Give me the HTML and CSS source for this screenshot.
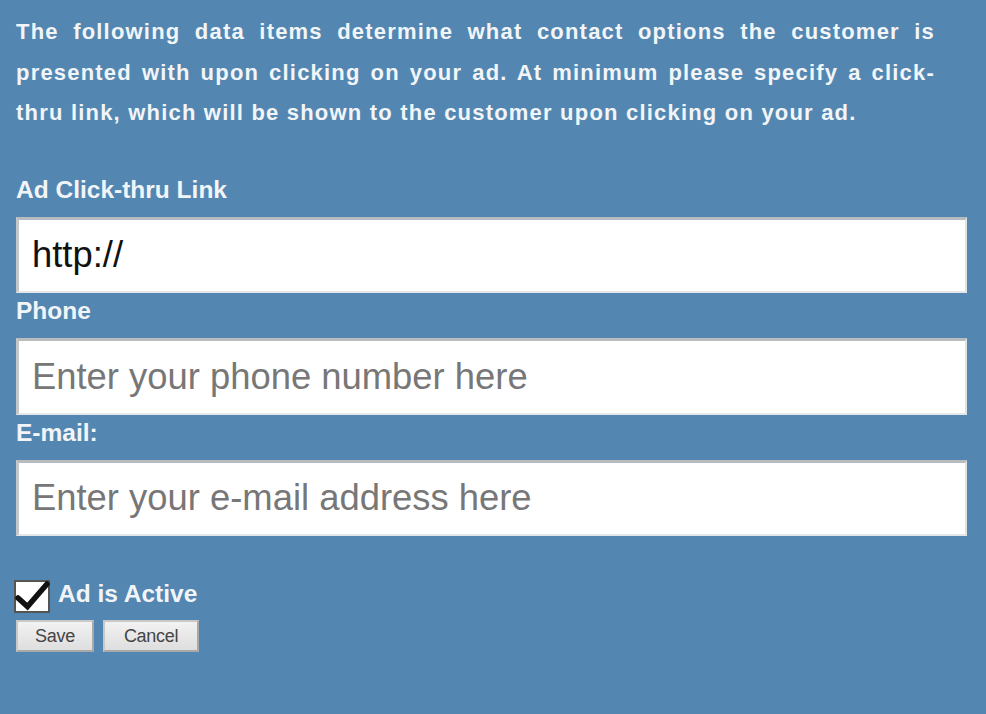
FILE: index.html
```html
<!DOCTYPE html>
<html>
<head>
<meta charset="utf-8">
<link rel="stylesheet" href="styles.css">
</head>
<body>
<div class="panel">
  <p class="intro">The following data items determine what contact options the customer is presented with upon clicking on your ad. At minimum please specify a click-thru link, which will be shown to the customer upon clicking on your ad.</p>
  <form class="form">
    <label class="field-label" for="link">Ad Click-thru Link</label>
    <input class="field" id="link" type="text" value="http://">
    <label class="field-label" for="phone">Phone</label>
    <input class="field" id="phone" type="text" placeholder="Enter your phone number here">
    <label class="field-label" for="email">E-mail:</label>
    <input class="field" id="email" type="text" placeholder="Enter your e-mail address here">
    <div class="active-row">
      <span class="checkbox">
        <svg class="check" viewBox="0 0 36 33" width="36" height="33"><path d="M4 18 L13.5 26.5 L33 4" fill="none" stroke="#111" stroke-width="5.5" stroke-linecap="round" stroke-linejoin="miter"/></svg>
      </span>
      <span class="active-label">Ad is Active</span>
    </div>
    <div class="buttons">
      <button type="button" class="btn btn-save">Save</button>
      <button type="button" class="btn btn-cancel">Cancel</button>
    </div>
  </form>
</div>
</body>
</html>
```
FILE: styles.css
```css
html, body {
  margin: 0;
  padding: 0;
  background: #5387b1;
  height: 100%;
}
.panel {
  padding: 12px 19px 0 16px;
  font-family: "Liberation Sans", Arial, sans-serif;
  color: #f2f5f8;
}
.intro {
  margin: 0 32px 38px 0;
  font-size: 22px;
  font-weight: bold;
  line-height: 40.5px;
  letter-spacing: 1.2px;
  text-align: justify;
}
.form {
  display: flex;
  flex-direction: column;
}
.field-label {
  display: block;
  font-size: 24.5px;
  font-weight: bold;
  line-height: 36px;
  margin-bottom: 9px;
}
.field {
  box-sizing: border-box;
  height: 76.5px;
  width: 100%;
  margin: 0;
  padding: 0 13px;
  border-style: solid;
  border-width: 3px 2px 2px 3px;
  border-color: #b9bcbf #dfe3e6 #e4e7ea #c4c7ca;
  background: #fff;
  font-family: "Liberation Sans", Arial, sans-serif;
  font-size: 36.4px;
  color: #111;
  outline: none;
}
.field::placeholder {
  color: #777;
}
.active-row {
  display: flex;
  align-items: flex-start;
  margin-top: 44px;
  margin-left: -2px;
  gap: 8px;
}
.checkbox {
  position: relative;
  box-sizing: border-box;
  width: 36px;
  height: 33px;
  border: 2px solid #555;
  background: #fff;
  flex: none;
}
.check {
  position: absolute;
  left: -2px;
  top: -2px;
}
.active-label {
  font-size: 24.5px;
  font-weight: bold;
  line-height: 26px;
  padding-top: 1px;
}
.buttons {
  display: flex;
  gap: 9px;
  margin-top: 7px;
}
.btn {
  box-sizing: border-box;
  height: 32px;
  padding: 0;
  border: 2px solid #b5b5b5;
  border-color: #c8c8c8 #a9a9a9 #a9a9a9 #c8c8c8;
  background: linear-gradient(#f2f2f2, #dedede);
  font-family: "Liberation Sans", Arial, sans-serif;
  font-size: 18px;
  letter-spacing: -0.3px;
  color: #444;
}
.btn-save { width: 78px; }
.btn-cancel { width: 96px; }
```
